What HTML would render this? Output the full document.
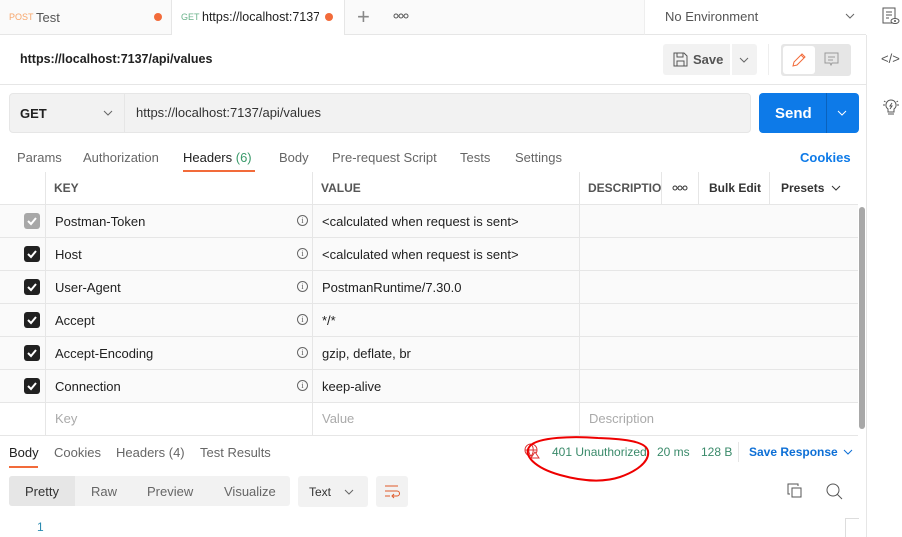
<!DOCTYPE html>
<html><head><style>
*{box-sizing:border-box;margin:0;padding:0}
body{width:902px;height:537px;overflow:hidden;background:#fff;font-family:"Liberation Sans",sans-serif;font-size:13px;color:#212121;position:relative}
.a{position:absolute;white-space:nowrap}
.l{position:absolute;background:#e6e6e6}
.cb{position:absolute;left:24px;width:16px;height:16px;border-radius:3px;background:#212121}
.cb svg{position:absolute;left:2px;top:2px}
.inf{position:absolute;left:297px;width:11px;height:11px;border:1px solid #666;border-radius:50%;font-size:8px;line-height:9px;text-align:center;color:#555;font-family:"Liberation Serif",serif}
.row{position:absolute;left:0;width:858px;height:33px;background:#fafafa;border-bottom:1px solid #e6e6e6}
</style></head><body>
<!-- tab bar -->
<div class="a" style="left:0;top:0;width:172px;height:35px;background:#fafafa;border-bottom:1px solid #e6e6e6;border-right:1px solid #e6e6e6"></div>
<div class="a" style="left:9px;top:12px;font-size:9px;color:#f7a66b">POST</div>
<div class="a" style="left:36px;top:10px;color:#555">Test</div>
<div class="a" style="left:154px;top:13px;width:8px;height:8px;border-radius:50%;background:#f26b3a"></div>
<div class="a" style="left:181px;top:12px;font-size:9px;color:#6bb38b">GET</div>
<div class="a" style="left:202px;top:10px;width:117px;overflow:hidden;color:#212121;font-size:12.5px">https://localhost:7137/api</div>
<div class="a" style="left:325px;top:13px;width:8px;height:8px;border-radius:50%;background:#f26b3a"></div>
<div class="a" style="left:344px;top:0;width:300px;height:35px;background:#fafafa;border-bottom:1px solid #e6e6e6;border-left:1px solid #e6e6e6"></div>
<div class="a" style="left:357px;top:4px;font-size:22px;color:#888;font-weight:300">+</div>
<svg class="a" style="left:393px;top:13px" width="16" height="6"><circle cx="3" cy="3" r="2" fill="none" stroke="#555"/><circle cx="8" cy="3" r="2" fill="none" stroke="#555"/><circle cx="13" cy="3" r="2" fill="none" stroke="#555"/></svg>
<div class="a" style="left:644px;top:0;width:222px;height:35px;border-left:1px solid #eee;border-bottom:1px solid #e6e6e6;background:#fff"></div>
<div class="a" style="left:665px;top:9px;color:#555">No Environment</div>
<svg class="a" style="left:845px;top:12px" width="10" height="8"><path d="M1 2l4 4 4-4" stroke="#666" fill="none"/></svg>
<!-- right sidebar -->
<div class="l" style="left:866px;top:35px;width:1px;height:502px"></div>
<svg class="a" style="left:882px;top:7px" width="18" height="18"><rect x="1" y="1" width="12" height="15" fill="none" stroke="#555"/><path d="M4 5h6M4 8h6M4 11h3" stroke="#555"/><ellipse cx="13" cy="14" rx="4" ry="2.5" fill="#fff" stroke="#555"/><circle cx="13" cy="14" r="1" fill="#555"/></svg>
<div class="a" style="left:881px;top:51px;font-size:13px;color:#555">&lt;/&gt;</div>
<svg class="a" style="left:882px;top:98px" width="18" height="18"><path d="M9 2a5 5 0 0 0-3 9v3h6v-3a5 5 0 0 0-3-9z" fill="none" stroke="#555"/><path d="M6 16h6M10 5l-2 3h2l-2 3" stroke="#555" fill="none"/><path d="M1 7h2M15 7h2M2 3l1.5 1M16 3l-1.5 1" stroke="#555"/></svg>
<!-- title row -->
<div class="a" style="left:20px;top:52px;font-weight:bold;font-size:12.5px">https://localhost:7137/api/values</div>
<div class="l" style="left:0;top:84px;width:866px;height:1px"></div>
<div class="a" style="left:663px;top:44px;width:67px;height:31px;background:#f2f2f2;border-radius:3px 0 0 3px"></div>
<svg class="a" style="left:673px;top:52px" width="15" height="15"><path d="M1 1h10l3 3v10H1z" fill="none" stroke="#555"/><path d="M4 1v4h6V1M4 14V9h7v5" fill="none" stroke="#555"/></svg>
<div class="a" style="left:693px;top:52px;font-weight:bold;color:#555">Save</div>
<div class="a" style="left:732px;top:44px;width:25px;height:31px;background:#f2f2f2;border-radius:0 3px 3px 0"></div>
<svg class="a" style="left:739px;top:56px" width="10" height="8"><path d="M1 2l4 4 4-4" stroke="#666" fill="none"/></svg>
<div class="l" style="left:768px;top:44px;width:1px;height:31px;background:#eee"></div>
<div class="a" style="left:781px;top:44px;width:70px;height:32px;background:#e6e6e6;border-radius:3px"></div>
<div class="a" style="left:783px;top:46px;width:32px;height:28px;background:#fff;border-radius:3px"></div>
<svg class="a" style="left:791px;top:52px" width="16" height="16"><path d="M2 14l1-4 8-8 3 3-8 8z M10 3l3 3" fill="none" stroke="#f26b3a"/></svg>
<svg class="a" style="left:824px;top:52px" width="16" height="16"><path d="M1 1h13v10H8l-1 2-1-2H1z M4 5h7M4 8h5" fill="none" stroke="#999"/></svg>
<!-- url bar -->
<div class="a" style="left:9px;top:93px;width:742px;height:40px;background:#f2f2f2;border:1px solid #e6e6e6;border-radius:4px"></div>
<div class="l" style="left:124px;top:94px;width:1px;height:38px"></div>
<div class="a" style="left:20px;top:106px;font-weight:bold">GET</div>
<svg class="a" style="left:103px;top:109px" width="10" height="8"><path d="M1 2l4 4 4-4" stroke="#666" fill="none"/></svg>
<div class="a" style="left:136px;top:105px;color:#333">https://localhost:7137/api/values</div>
<div class="a" style="left:759px;top:93px;width:100px;height:40px;background:#0d7ae8;border-radius:4px"></div>
<div class="l" style="left:826px;top:93px;width:1px;height:40px;background:#0a62bd"></div>
<div class="a" style="left:775px;top:105px;color:#fff;font-weight:bold;font-size:15px">Send</div>
<svg class="a" style="left:837px;top:109px" width="10" height="8"><path d="M1 2l4 4 4-4" stroke="#fff" fill="none"/></svg>
<!-- request tabs -->
<div class="a" style="left:17px;top:150px;color:#666">Params</div>
<div class="a" style="left:83px;top:150px;color:#666">Authorization</div>
<div class="a" style="left:183px;top:150px;color:#212121">Headers <span style="color:#3a9a6a">(6)</span></div>
<div class="a" style="left:183px;top:170px;width:72px;height:2px;background:#f26b3a"></div>
<div class="a" style="left:279px;top:150px;color:#666">Body</div>
<div class="a" style="left:332px;top:150px;color:#666">Pre-request Script</div>
<div class="a" style="left:460px;top:150px;color:#666">Tests</div>
<div class="a" style="left:515px;top:150px;color:#666">Settings</div>
<div class="a" style="left:800px;top:150px;color:#0d7ae8;font-weight:bold">Cookies</div>
<!-- table header -->
<div class="l" style="left:0;top:204px;width:858px;height:1px"></div>
<div class="a" style="left:54px;top:181px;font-weight:bold;color:#555;font-size:12px">KEY</div>
<div class="a" style="left:321px;top:181px;font-weight:bold;color:#555;font-size:12px">VALUE</div>
<div class="a" style="left:588px;top:181px;width:73px;overflow:hidden;font-weight:bold;color:#555;font-size:12px">DESCRIPTION</div>
<svg class="a" style="left:672px;top:185px" width="16" height="6"><circle cx="3" cy="3" r="2" fill="none" stroke="#333"/><circle cx="8" cy="3" r="2" fill="none" stroke="#333"/><circle cx="13" cy="3" r="2" fill="none" stroke="#333"/></svg>
<div class="a" style="left:709px;top:181px;font-weight:bold;font-size:12px;color:#333">Bulk Edit</div>
<div class="a" style="left:781px;top:181px;font-weight:bold;font-size:12px;color:#333">Presets</div>
<svg class="a" style="left:831px;top:184px" width="10" height="8"><path d="M1 2l4 4 4-4" stroke="#333" fill="none"/></svg>
<!-- rows -->
<div class="row" style="top:205px"></div>
<div class="row" style="top:238px"></div>
<div class="row" style="top:271px"></div>
<div class="row" style="top:304px"></div>
<div class="row" style="top:337px"></div>
<div class="row" style="top:370px"></div>
<div class="row" style="top:403px;background:#fff"></div>
<div class="l" style="left:45px;top:172px;width:1px;height:264px"></div>
<div class="l" style="left:312px;top:172px;width:1px;height:264px"></div>
<div class="l" style="left:579px;top:172px;width:1px;height:264px"></div>
<div class="l" style="left:661px;top:172px;width:1px;height:33px"></div>
<div class="l" style="left:698px;top:172px;width:1px;height:33px"></div>
<div class="l" style="left:769px;top:172px;width:1px;height:33px"></div>
<div class="a" style="left:858px;top:205px;width:8px;height:225px;background:#fff"></div>
<div class="a" style="left:859px;top:207px;width:6px;height:222px;background:#a8a8a8;border-radius:3px"></div>

<div class="cb" style="top:213px;background:#a8a8a8"><svg width="12" height="12"><path d="M2 6l3 3 5-6" stroke="#fff" stroke-width="2" fill="none"/></svg></div>
<div class="cb" style="top:246px"><svg width="12" height="12"><path d="M2 6l3 3 5-6" stroke="#fff" stroke-width="2" fill="none"/></svg></div>
<div class="cb" style="top:279px"><svg width="12" height="12"><path d="M2 6l3 3 5-6" stroke="#fff" stroke-width="2" fill="none"/></svg></div>
<div class="cb" style="top:312px"><svg width="12" height="12"><path d="M2 6l3 3 5-6" stroke="#fff" stroke-width="2" fill="none"/></svg></div>
<div class="cb" style="top:345px"><svg width="12" height="12"><path d="M2 6l3 3 5-6" stroke="#fff" stroke-width="2" fill="none"/></svg></div>
<div class="cb" style="top:378px"><svg width="12" height="12"><path d="M2 6l3 3 5-6" stroke="#fff" stroke-width="2" fill="none"/></svg></div>

<div class="a" style="left:55px;top:214px">Postman-Token</div>
<div class="a" style="left:55px;top:247px">Host</div>
<div class="a" style="left:55px;top:280px">User-Agent</div>
<div class="a" style="left:55px;top:313px">Accept</div>
<div class="a" style="left:55px;top:346px">Accept-Encoding</div>
<div class="a" style="left:55px;top:379px">Connection</div>
<div class="a" style="left:55px;top:411px;color:#aaa">Key</div>
<div class="inf" style="top:215px">i</div><div class="inf" style="top:248px">i</div><div class="inf" style="top:281px">i</div>
<div class="inf" style="top:314px">i</div><div class="inf" style="top:347px">i</div><div class="inf" style="top:380px">i</div>
<div class="a" style="left:322px;top:214px">&lt;calculated when request is sent&gt;</div>
<div class="a" style="left:322px;top:247px">&lt;calculated when request is sent&gt;</div>
<div class="a" style="left:322px;top:280px">PostmanRuntime/7.30.0</div>
<div class="a" style="left:322px;top:313px">*/*</div>
<div class="a" style="left:322px;top:346px">gzip, deflate, br</div>
<div class="a" style="left:322px;top:379px">keep-alive</div>
<div class="a" style="left:322px;top:411px;color:#aaa">Value</div>
<div class="a" style="left:589px;top:411px;color:#aaa">Description</div>
<!-- response -->
<div class="a" style="left:9px;top:445px;color:#212121">Body</div>
<div class="a" style="left:9px;top:466px;width:29px;height:2px;background:#f26b3a"></div>
<div class="a" style="left:54px;top:445px;color:#666">Cookies</div>
<div class="a" style="left:116px;top:445px;color:#666">Headers (4)</div>
<div class="a" style="left:200px;top:445px;color:#666">Test Results</div>
<svg class="a" style="left:524px;top:443px" width="16" height="16"><circle cx="7" cy="7" r="6" fill="none" stroke="#d33"/><path d="M1 7h12M7 1c-3 3-3 9 0 12M7 1c3 3 3 9 0 12" stroke="#d33" fill="none"/><path d="M11 9l4 6h-8z" fill="#fff" stroke="#d33"/></svg>
<div class="a" style="left:552px;top:445px;color:#3a8a6a;font-size:12px">401 Unauthorized</div>
<div class="a" style="left:657px;top:445px;color:#3a8a6a;font-size:12px">20 ms</div>
<div class="a" style="left:701px;top:445px;color:#3a8a6a;font-size:12px">128 B</div>
<div class="l" style="left:738px;top:442px;width:1px;height:20px"></div>
<div class="a" style="left:749px;top:445px;color:#0d6fd6;font-weight:bold;font-size:12px">Save Response</div>
<svg class="a" style="left:843px;top:448px" width="10" height="8"><path d="M1 2l4 4 4-4" stroke="#0d6fd6" fill="none"/></svg>
<svg class="a" style="left:520px;top:433px" width="135" height="50"><path d="M78 5c-25-2-60-1-68 8-8 9 5 22 30 29 25 7 45 7 60 2 15-5 30-15 28-26-2-9-20-12-50-13" fill="none" stroke="#e00" stroke-width="2"/></svg>
<div class="a" style="left:9px;top:476px;width:281px;height:30px;background:#f2f2f2;border-radius:3px"></div>
<div class="a" style="left:9px;top:476px;width:66px;height:30px;background:#e6e6e6;border-radius:3px 0 0 3px"></div>
<div class="a" style="left:25px;top:484px;color:#333">Pretty</div>
<div class="a" style="left:91px;top:484px;color:#666">Raw</div>
<div class="a" style="left:147px;top:484px;color:#666">Preview</div>
<div class="a" style="left:224px;top:484px;color:#666">Visualize</div>
<div class="a" style="left:298px;top:476px;width:70px;height:31px;background:#f2f2f2;border-radius:3px"></div>
<div class="a" style="left:309px;top:485px;color:#333;font-size:12px">Text</div>
<svg class="a" style="left:344px;top:488px" width="10" height="8"><path d="M1 2l4 4 4-4" stroke="#666" fill="none"/></svg>
<div class="a" style="left:376px;top:476px;width:32px;height:31px;background:#f2f2f2;border-radius:3px"></div>
<svg class="a" style="left:384px;top:484px" width="16" height="16"><path d="M1 2h13M1 7h12a2 2 0 0 1 0 5H9M1 12h5M10 10l-2 2 2 2" stroke="#e05a2a" fill="none"/></svg>
<svg class="a" style="left:787px;top:483px" width="16" height="16"><rect x="5" y="5" width="9" height="9" fill="none" stroke="#555"/><path d="M3 11H1V1h10v2" fill="none" stroke="#555"/></svg>
<svg class="a" style="left:826px;top:483px" width="17" height="17"><circle cx="7" cy="7" r="6" fill="none" stroke="#555"/><path d="M11 11l5 5" stroke="#555"/></svg>
<div class="a" style="left:37px;top:520px;color:#2a8ab0;font-size:12px">1</div>
<div class="a" style="left:845px;top:518px;width:14px;height:19px;border-left:1px solid #ddd;border-top:1px solid #ddd"></div>
</body></html>
